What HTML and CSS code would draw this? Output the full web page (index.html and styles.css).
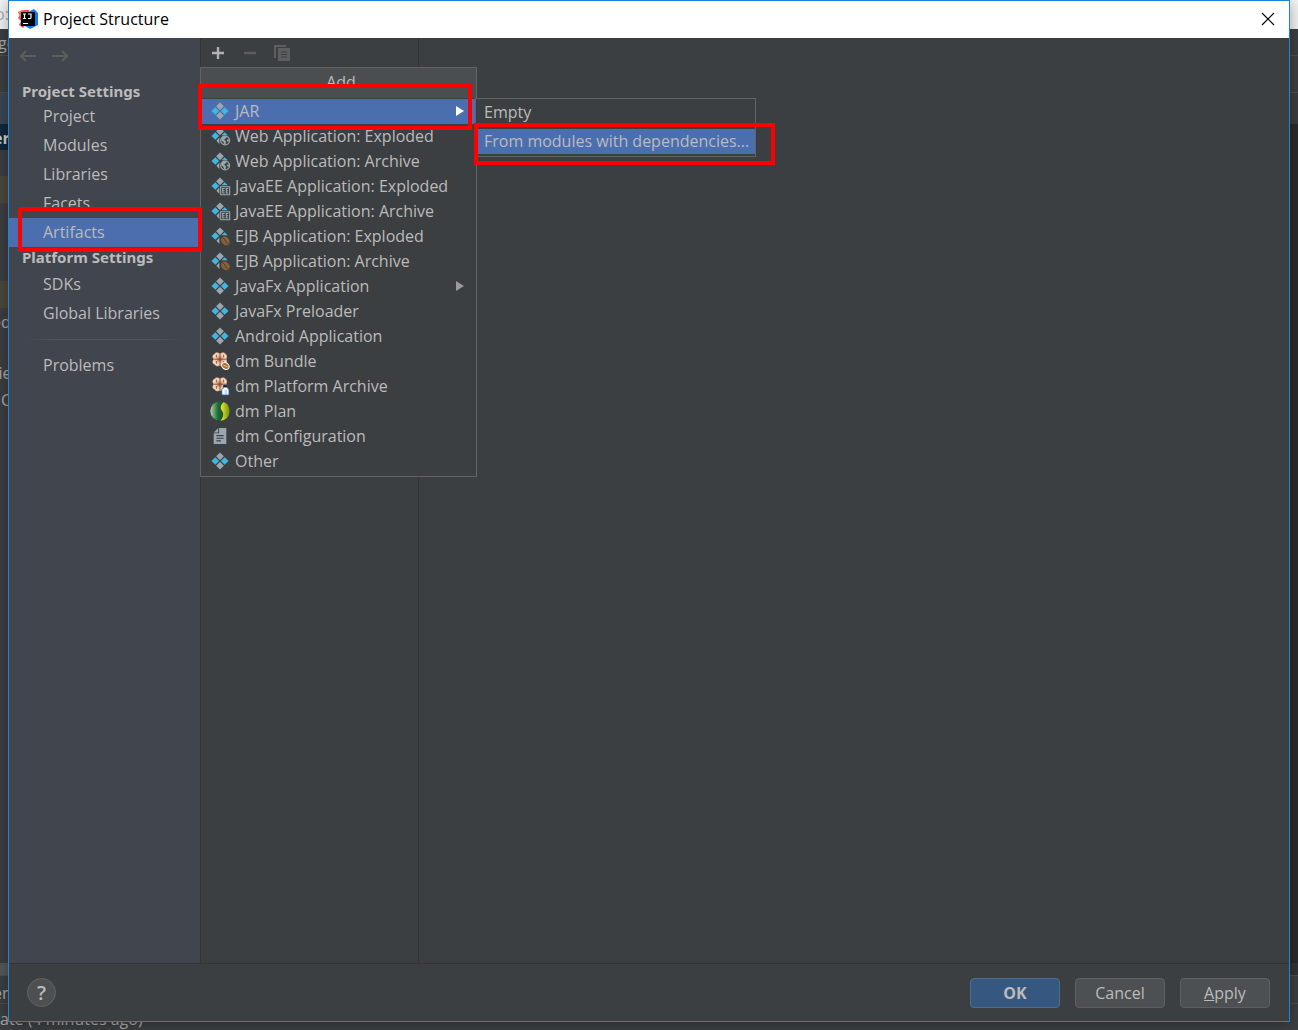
FILE: index.html
```html
<!DOCTYPE html>
<html lang="en">
<head>
<meta charset="utf-8">
<title>Project Structure</title>
<link rel="stylesheet" href="styles.css">
</head>
<body>
<svg class="defs" aria-hidden="true">
  <defs>
    <symbol id="artifact" viewBox="0 0 20 20">
      <path fill="#9aa7b0" d="M10 .5l4.300 4.300-4.300 4.300-4.300-4.300zM10 10.900l4.300 4.300-4.300 4.300-4.300-4.300z"/>
      <path fill="#40b6e0" d="M4.800 5.700l4.300 4.300-4.300 4.300L.5 10zM15.200 5.700l4.300 4.300-4.300 4.300-4.300-4.300z"/>
    </symbol>
    <symbol id="artifact-part" viewBox="0 0 20 20">
      <path fill="#9aa7b0" d="M10 .5l4.300 4.300-4.300 4.300-4.300-4.300zM9.300 11.800v7l-3.300-3.600z"/>
      <path fill="#40b6e0" d="M4.800 5.700l4.300 4.300-4.300 4.300L.5 10zM15.200 5.700l3.500 3.500h-7z"/>
    </symbol>
    <symbol id="web" viewBox="0 0 20 20" overflow="visible">
      <use href="#artifact-part" width="20" height="20"/>
      <circle cx="15.700" cy="15" r="4.900" fill="#3c3f41" stroke="#9aa7b0" stroke-width="1.300"/>
      <path fill="#9aa7b0" d="M11.500 12l3.500-2 2.500 1-2 2.500-1.500.5 2.500 1.500v3l-2 .5-1-3-2-1zM19 13l1 2-1 2-1.500-2z"/>
    </symbol>
    <symbol id="ee" viewBox="0 0 20 20" overflow="visible">
      <use href="#artifact-part" width="20" height="20"/>
      <path fill="#3c3f41" stroke="#9aa7b0" stroke-width="1.200" d="M10.700 10.800h10v9h-10z"/>
      <path fill="none" stroke="#9aa7b0" stroke-width="1.200" d="M15.200 12.800h-2.200v5h2.200M13 15.300h2M19.200 12.800H17v5h2.200M17 15.300h2"/>
    </symbol>
    <symbol id="ejb" viewBox="0 0 20 20" overflow="visible">
      <use href="#artifact-part" width="20" height="20"/>
      <ellipse cx="16" cy="15.500" rx="5.500" ry="4.200" transform="rotate(45 16 15.500)" fill="#8a6037"/>
      <path d="M12 11.500q3 1 4 4t4 4" fill="none" stroke="#3c3f41" stroke-width="1"/>
    </symbol>
    <radialGradient id="clover-fill"><stop offset="0" stop-color="#8b4932"/><stop offset=".5" stop-color="#e9bd9e"/><stop offset="1" stop-color="#fbe4cc"/></radialGradient>
    <symbol id="clover" viewBox="0 0 20 20">
      <path fill="url(#clover-fill)" stroke="#a97058" stroke-width=".6" d="M10 2q4-3 6 0 3 2 1 6 2 4-1 6-3 3-6 1-4 2-6-1-4-2-1-6-3-4 1-6 2-3 6 0z"/>
      <path fill="none" stroke="#85503d" stroke-width="1" d="M10 2v13M3 8h14M6 3v3M14 3v3M6 10v3M14 10v3"/>
    </symbol>
    <symbol id="bundle" viewBox="0 0 20 20" overflow="visible">
      <use href="#clover" width="20" height="20"/>
      <ellipse cx="16" cy="15.500" rx="4.500" ry="3.500" transform="rotate(35 16 15.500)" fill="#a8703b" stroke="#fff" stroke-width="1.200"/>
      <path d="M13.500 14.500l5 2" stroke="#f0c98e" stroke-width="1"/>
    </symbol>
    <symbol id="archive" viewBox="0 0 20 20" overflow="visible">
      <use href="#clover" width="20" height="20"/>
      <path d="M14 9h4v3l2 2v6h-8v-6l2-2z" fill="#fff" stroke="#245c9e" stroke-width="1"/>
      <path d="M14 9h4v2.500h-4z" fill="#222"/>
      <path d="M15 14h3v5h-3z" fill="#bfdcf5"/>
    </symbol>
    <linearGradient id="plan-dark"><stop offset="0" stop-color="#b8d0b0"/><stop offset=".4" stop-color="#176b32"/><stop offset="1" stop-color="#075127"/></linearGradient>
    <linearGradient id="plan-light"><stop offset="0" stop-color="#ecf23b"/><stop offset="1" stop-color="#75900f"/></linearGradient>
    <symbol id="plan" viewBox="0 0 20 20">
      <circle cx="10" cy="10" r="9.700" fill="url(#plan-dark)"/>
      <path d="M13 1q-5 5-1.500 9 3 4-1.500 9.700 9 0 9.700-9.700-.7-8-6.700-9z" fill="url(#plan-light)"/>
      <path d="M13 1q-5 5-1.500 9 3 4-1.500 9.700" fill="none" stroke="#263b20"/>
    </symbol>
    <symbol id="config" viewBox="0 0 20 20">
      <path fill="#9aa7b0" d="M9 1h8v18H3V7h6zM8 1v5H3z"/>
      <path stroke="#3c3f41" stroke-width="1.300" d="M6 9.500h8M6 12.500h8M6 15.500h5"/>
    </symbol>
  </defs>
</svg>

<div class="backdrop" aria-hidden="true">
  <div class="back-title">o:\</div>
  <div class="back-tools">ge</div>
  <div class="back-tabs"></div>
  <div class="back-tab"></div>
  <div class="back-selected">er</div>
  <div class="back-gap"></div>
  <div class="back-mark"></div>
  <div class="back-space"></div>
  <div class="back-mark"></div>
  <div class="back-line">ed</div>
  <div class="back-line back-low">rie</div>
  <div class="back-line back-end">C</div>
  <div class="back-fill"></div>
  <div class="back-bar"></div>
  <div class="back-foot">er</div>
  <div class="back-status">ate (4 minutes ago)</div>
</div>

<main class="dialog">
  <header class="titlebar">
    <svg class="logo" viewBox="0 0 20 20" aria-hidden="true">
      <path fill="#fc475f" d="M0 3l5-2 6 0 3 7-9 11-4-3 2-4-3-3 2-3z"/>
      <path fill="#f97a30" d="M0 3l5-2 1 4-4 3z"/>
      <path fill="#087cfa" d="M12 2l4-2 4 4v12l-8 4-5-3z"/>
      <path d="M3 3h14v14H3z"/>
      <path fill="none" stroke="#fff" stroke-width="1.200" d="M5 5h3M6.500 5v4.500M5 9.500h3M10 5h3v3.500q0 1-1 1h-2M5 14.500h5"/>
    </svg>
    <h1 class="title">Project Structure</h1>
    <button class="close" aria-label="Close"><svg viewBox="0 0 14 14"><path d="M1 1l12 12M13 1L1 13" stroke="#000" stroke-width="1.200"/></svg></button>
  </header>

  <div class="body">
    <nav class="sidebar">
      <div class="history">
        <button class="plain" aria-label="Back"><svg viewBox="0 0 18 14"><path d="M17 7H2M7 2L2 7l5 5" fill="none" stroke="#5d5e5e" stroke-width="2"/></svg></button>
        <button class="plain" aria-label="Forward"><svg viewBox="0 0 18 14"><path d="M1 7h15M11 2l5 5-5 5" fill="none" stroke="#5d5e5e" stroke-width="2"/></svg></button>
      </div>
      <h2 class="group">Project Settings</h2>
      <a class="nav" href="#project">Project</a>
      <a class="nav" href="#modules">Modules</a>
      <a class="nav" href="#libraries">Libraries</a>
      <a class="nav" href="#facets">Facets</a>
      <a class="nav current" href="#artifacts">Artifacts<span class="callout callout-nav"></span></a>
      <h2 class="group platform">Platform Settings</h2>
      <a class="nav" href="#sdks">SDKs</a>
      <a class="nav" href="#global">Global Libraries</a>
      <hr class="rule">
      <a class="nav" href="#problems">Problems</a>
    </nav>

    <section class="list">
      <div class="toolbar">
        <button class="plain" aria-label="Add"><svg viewBox="0 0 18 18"><path d="M9 3v12M3 9h12" stroke="#afb1b3" stroke-width="2.400"/></svg></button>
        <button class="plain" aria-label="Remove"><svg viewBox="0 0 18 18"><path d="M3 9h12" stroke="#5d5e5e" stroke-width="2.400"/></svg></button>
        <button class="plain" aria-label="Copy"><svg viewBox="0 0 18 18"><path d="M1 1h12v2H3v11H1z" fill="#5d5e5e"/><path d="M5 4h12v13H5z" fill="#5d5e5e"/><path d="M8 8h6M8 10.500h6M8 13h6" stroke="#3c3f41"/></svg></button>
      </div>

      <div class="menu">
        <div class="menu-title">Add</div>
        <div class="items">
          <button class="item active"><svg class="icon"><use href="#artifact"/></svg>JAR<svg class="arrow" viewBox="0 0 8 10"><path d="M0 0l8 5-8 5z"/></svg></button>
          <button class="item"><svg class="icon"><use href="#web"/></svg>Web Application: Exploded</button>
          <button class="item"><svg class="icon"><use href="#web"/></svg>Web Application: Archive</button>
          <button class="item"><svg class="icon"><use href="#ee"/></svg>JavaEE Application: Exploded</button>
          <button class="item"><svg class="icon"><use href="#ee"/></svg>JavaEE Application: Archive</button>
          <button class="item"><svg class="icon"><use href="#ejb"/></svg>EJB Application: Exploded</button>
          <button class="item"><svg class="icon"><use href="#ejb"/></svg>EJB Application: Archive</button>
          <button class="item"><svg class="icon"><use href="#artifact"/></svg>JavaFx Application<svg class="arrow" viewBox="0 0 8 10"><path d="M0 0l8 5-8 5z"/></svg></button>
          <button class="item"><svg class="icon"><use href="#artifact"/></svg>JavaFx Preloader</button>
          <button class="item"><svg class="icon"><use href="#artifact"/></svg>Android Application</button>
          <button class="item"><svg class="icon"><use href="#bundle"/></svg>dm Bundle</button>
          <button class="item"><svg class="icon"><use href="#archive"/></svg>dm Platform Archive</button>
          <button class="item"><svg class="icon wide"><use href="#plan"/></svg>dm Plan</button>
          <button class="item"><svg class="icon"><use href="#config"/></svg>dm Configuration</button>
          <button class="item"><svg class="icon"><use href="#artifact"/></svg>Other</button>
        </div>
        <div class="submenu">
          <button class="subitem">Empty</button>
          <button class="subitem active">From modules with dependencies...</button>
          <span class="callout callout-sub"></span>
        </div>
        <span class="callout callout-jar"></span>
      </div>
    </section>
    <section class="detail"></section>
  </div>

  <footer class="footer">
    <button class="help" aria-label="Help">?</button>
    <button class="button primary">OK</button>
    <button class="button">Cancel</button>
    <button class="button"><span class="key">A</span>pply</button>
  </footer>
</main>
</body>
</html>
```

FILE: styles.css
```css
* { box-sizing: border-box; }

body {
  margin: 0;
  height: 100vh;
  overflow: hidden;
  position: relative;
  padding: 0 8px 8px;
  background: #2f3031;
  color: #bbb;
  font: 16px/20px "Open Sans", "Noto Sans", sans-serif;
}

button {
  margin: 0;
  padding: 0;
  border: 0;
  background: none;
  color: inherit;
  font: inherit;
}

a { color: inherit; text-decoration: none; }
h1, h2 { margin: 0; font-size: inherit; }
.defs { position: absolute; width: 0; height: 0; }

/* Main window behind the dialog */
.backdrop {
  position: absolute;
  inset: 0;
  display: flex;
  flex-direction: column;
  overflow: hidden;
  color: #aaa;
  background: linear-gradient(90deg, #3c3e40 50%, #2b2b2b 50%);
}
.backdrop > div { flex: none; white-space: nowrap; }
.back-title { height: 29px; padding-top: 4px; text-indent: -5px; background: #f3f3f3; }
.backdrop .back-tools { height: 27px; padding-top: 4px; text-indent: -2px; background: #3c3f41; border-bottom: 1px solid #4d4f50; }
.back-tabs { height: 37px; background: #3c3e40; border-bottom: 1px solid #4d4f50; }
.back-tab { height: 31px; background: linear-gradient(90deg, #3b4754 50%, #3a3c3e 50%); }
.back-selected { height: 26px; padding-top: 4px; text-indent: -7px; background: linear-gradient(90deg, #0d293e 50%, #2b2b2b 50%); color: #ccc; font-weight: 700; }
.back-gap { height: 26px; }
.back-mark { height: 27px; background: linear-gradient(90deg, #4c483c 50%, #2b2b2b 50%); }
.back-space { height: 78px; }
.back-line { height: 41px; padding-top: 4px; text-indent: -8px; }
.back-low { padding-top: 14px; }
.back-end { height: 30px; padding: 0; text-indent: 1px; }
.backdrop .back-fill { flex: 1; }
.back-bar { height: 12px; background: linear-gradient(90deg, #55585a 50%, #313335 50%); }
.back-foot { height: 28px; padding-top: 7px; text-indent: -7px; background: #3c3f41; border-top: 1px solid #4d4f50; }
.back-status { height: 27px; padding-top: 5px; background: #3c3f41; border-top: 1px solid #4a4c4d; }

.dialog {
  position: relative;
  height: 100%;
  display: flex;
  flex-direction: column;
  background: #3c3f41;
  border: 1px solid #1d84d8;
  box-shadow: 0 2px 14px #0005;
}
.titlebar {
  height: 37px;
  display: flex;
  align-items: center;
  gap: 5px;
  padding: 0 14px 2px 9px;
  background: #fff;
  color: #000;
}
.logo { width: 20px; height: 20px; }
.title { flex: 1; font-weight: 400; }
.close svg { display: block; width: 14px; height: 14px; }
.body { flex: 1; display: flex; min-height: 0; }

.sidebar { width: 192px; background: #41454e; border-right: 1px solid #323435; }
.history { display: flex; gap: 14px; padding: 11px 10px 18px; }
.history svg { display: block; width: 18px; height: 14px; }
.group { height: 21px; padding-left: 13px; font: 700 15px/20px "Noto Sans", sans-serif; white-space: nowrap; }
.platform { height: 23px; }
.nav { display: flex; align-items: center; height: 29px; padding: 0 0 2px 34px; position: relative; }
.current { background: #4b6eaf; }
.rule { height: 1px; margin: 11px 16px; border: 0; background: linear-gradient(90deg, transparent, #54585b 20%, #54585b 80%, transparent); }

.list { position: relative; width: 218px; border-right: 1px solid #323435; }
.toolbar { display: flex; gap: 14px; padding: 6px 8px; }
.toolbar svg { display: block; width: 18px; height: 18px; }
.detail { flex: 1; }

.menu {
  position: absolute;
  top: 29px;
  left: -1px;
  width: 277px;
  border: 1px solid #616364;
  background: #3c3f41;
}
.menu-title { height: 30px; padding-top: 4px; padding-left: 5px; text-align: center; background: #4b4e51; }
.items { padding: 1px 0 2px; }
.item { display: flex; align-items: center; width: 100%; height: 25px; gap: 6px; padding: 0 12px 2px 10px; white-space: nowrap; }
.icon { width: 18px; height: 18px; flex: none; overflow: visible; }
.wide { width: 20px; height: 20px; margin: 0 -1px; }
.active { background: #4b6eaf; }
.arrow { width: 8px; height: 10px; margin-left: auto; fill: #999b9c; }
.active .arrow { fill: #fff; }

.submenu {
  position: absolute;
  top: 30px;
  left: 274px;
  width: 281px;
  padding: 1px 0 2px 2px;
  border: 1px solid #616364;
  background: #3c3f41;
}
.subitem { display: block; width: 100%; height: 25px; padding: 0 0 2px 6px; text-align: left; white-space: nowrap; }
.subitem + .subitem { margin-top: 4px; }

.callout { position: absolute; border: 4px solid #f00; pointer-events: none; }
.callout-nav { inset: -11px -2px -5px 9px; z-index: 1; }
.callout-jar { top: 16px; left: -3px; width: 274px; height: 46px; }
.callout-sub { top: 24px; left: -2px; width: 301px; height: 42px; }

.footer {
  height: 58px;
  display: flex;
  align-items: center;
  gap: 15px;
  padding: 0 19px 0 18px;
  border-top: 1px solid #323435;
}
.help {
  width: 29px;
  height: 29px;
  margin-right: auto;
  border: 1px solid #626567;
  border-radius: 50%;
  background: #4c5052;
  font-size: 20px;
  font-weight: 600;
}
.button { width: 90px; height: 30px; border: 1px solid #5e6060; border-radius: 4px; background: #4c5052; }
.primary { background: #365880; border-color: #4c708c; font-weight: 700; }
.key { text-decoration: underline; }
```
